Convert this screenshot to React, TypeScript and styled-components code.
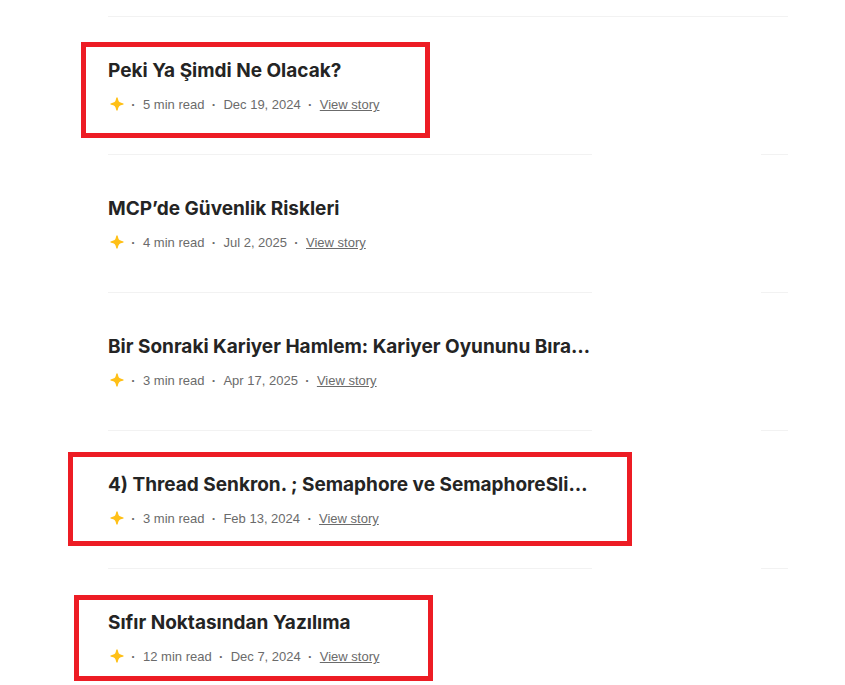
import React from "react";
import styled, { createGlobalStyle } from "styled-components";

const Global = createGlobalStyle`
  *, *::before, *::after { box-sizing: border-box; }
  body { margin: 0; background: #fff; color: #242424; font-family: "Liberation Sans", Arial, sans-serif; }
`;

const List = styled.main`
  padding: 16px 57px 0 108px;
`;

const Divider = styled.div<{ $split: boolean }>`
  display: flex;
  justify-content: space-between;
  &::before, &::after { content: ""; height: 1px; background: #f2f2f2; }
  &::before { flex: ${(p) => (p.$split ? "0 1 484px" : "1")}; }
  &::after { width: ${(p) => (p.$split ? "27px" : "0")}; }
`;

const Story = styled.article`
  position: relative;
  padding: 42px 0 39px;
`;

const Title = styled.h2`
  margin: 0;
  font-family: Inter, "Liberation Sans", sans-serif;
  font-size: 19px;
  line-height: 24px;
  font-weight: 700;
  white-space: nowrap;
`;

const Meta = styled.div`
  display: flex;
  align-items: center;
  margin-top: 12px;
  font-size: 13px;
  line-height: 20px;
  color: #6b6b6b;
  white-space: nowrap;
`;

const Star = styled.svg`
  width: 16px;
  height: 16px;
  flex: none;
`;

const Dot = styled.span`
  width: 19px;
  text-align: center;
  font-weight: 700;
`;

const StoryLink = styled.a`
  color: inherit;
  text-decoration: underline;
  text-underline-offset: 1px;
`;

type Box = { top: number; left: number; width: number; height: number };

const Highlight = styled.div<{ $box: Box }>`
  position: absolute;
  top: ${(p) => p.$box.top}px;
  left: ${(p) => p.$box.left}px;
  width: ${(p) => p.$box.width}px;
  height: ${(p) => p.$box.height}px;
  border: 5px solid #ed1c24;
  pointer-events: none;
`;

const stories: { title: string; read: string; date: string; box?: Box }[] = [
  { title: "Peki Ya Şimdi Ne Olacak?", read: "5 min read", date: "Dec 19, 2024", box: { top: 25, left: -27, width: 349, height: 96 } },
  { title: "MCP’de Güvenlik Riskleri", read: "4 min read", date: "Jul 2, 2025" },
  { title: "Bir Sonraki Kariyer Hamlem: Kariyer Oyununu Bıra…", read: "3 min read", date: "Apr 17, 2025" },
  { title: "4) Thread Senkron. ; Semaphore ve SemaphoreSli…", read: "3 min read", date: "Feb 13, 2024", box: { top: 21, left: -40, width: 564, height: 94 } },
  { title: "Sıfır Noktasından Yazılıma", read: "12 min read", date: "Dec 7, 2024", box: { top: 26, left: -34, width: 359, height: 86 } },
];

export default function App() {
  return (
    <>
      <Global />
      <List>
        {stories.map((s, i) => (
          <React.Fragment key={s.title}>
            <Divider $split={i > 0} />
            <Story>
              <Title>{s.title}</Title>
              <Meta>
                <Star viewBox="0 0 16 16" role="img" aria-label="Member-only story">
                  <path
                    fill="#ffc017"
                    d="M8.4 .5H9.6C10.2 3 10.5 4 11.2 4.8 12 5.5 13 5.8 15.5 6.4V7.6C13 8.2 12 8.5 11.2 9.2 10.5 10 10.2 11 9.6 13.5H8.4C7.8 11 7.5 10 6.8 9.2 6 8.5 5 8.2 2.5 7.6V6.4C5 5.8 6 5.5 6.8 4.8 7.5 4 7.8 3 8.4 .5Z"
                  />
                </Star>
                <Dot>·</Dot>
                <span>{s.read}</span>
                <Dot>·</Dot>
                <span>{s.date}</span>
                <Dot>·</Dot>
                <StoryLink href="#">View story</StoryLink>
              </Meta>
              {s.box && <Highlight $box={s.box} />}
            </Story>
          </React.Fragment>
        ))}
      </List>
    </>
  );
}
